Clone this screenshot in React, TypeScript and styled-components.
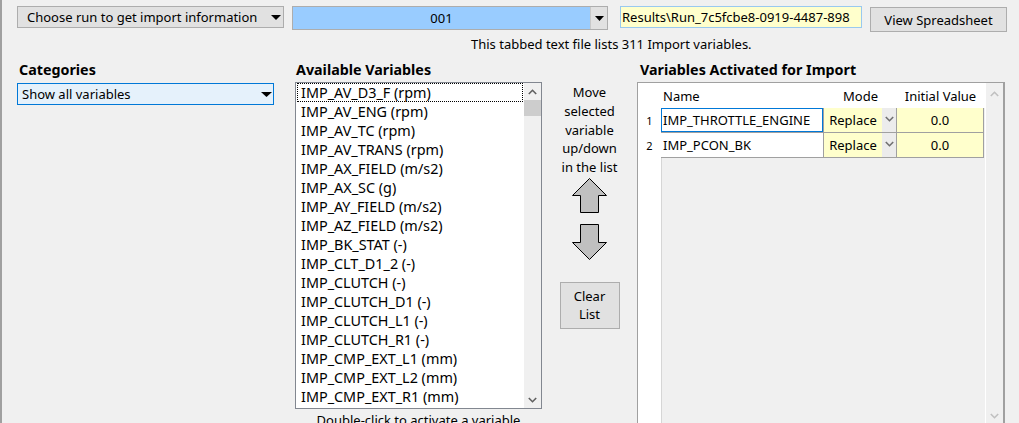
import * as React from 'react';
import styled, { createGlobalStyle } from 'styled-components';

const GlobalStyle = createGlobalStyle`
	html, body {
		margin: 0;
		padding: 0;
		background: #f0f0f0;
	}
	body {
		font-family: 'Noto Sans', 'Liberation Sans', sans-serif;
		font-size: 13px;
		color: #000;
	}
	* {
		box-sizing: border-box;
	}
`;

const Window = styled.div`
	width: 1019px;
	height: 423px;
	overflow: hidden;
	background: #f0f0f0;
	border-left: 2px solid #a0a0a0;
	padding-left: 15px;
`;

const TopBar = styled.div`
	display: flex;
	align-items: flex-start;
	padding-top: 6px;
	height: 32px;
`;

const DropButton = styled.div`
	width: 267px;
	height: 22px;
	background: #e1e1e1;
	border: 1px solid #adadad;
	display: flex;
	align-items: center;
	justify-content: space-between;
	padding: 0 2px 0 9px;
	white-space: nowrap;
`;

const RunCombo = styled.div`
	margin-left: 8px;
	width: 316px;
	height: 24px;
	border: 1px solid #adadad;
	display: flex;
`;

const RunValue = styled.div`
	flex: 1;
	background: #99ccff;
	text-align: center;
	line-height: 22px;
`;

const ComboArrow = styled.div`
	width: 17px;
	background: #e1e1e1;
	border-left: 1px solid #c8c8c8;
	display: flex;
	align-items: center;
	justify-content: center;
`;

const PathField = styled.div`
	margin-left: 12px;
	width: 242px;
	height: 22px;
	background: #ffffcc;
	border: 1px solid #99c9ef;
	padding-left: 1px;
	line-height: 20px;
	overflow: hidden;
	white-space: nowrap;
`;

const PushButton = styled.div<{ $w: number; $h: number }>`
	width: ${(p) => p.$w}px;
	height: ${(p) => p.$h}px;
	background: #e1e1e1;
	border: 1px solid #adadad;
	display: flex;
	align-items: center;
	justify-content: center;
	text-align: center;
	line-height: 18px;
`;

const ViewButton = styled(PushButton)`
	margin-left: 8px;
	margin-top: 1px;
`;

const Subtitle = styled.div`
	padding-left: 454px;
	margin-top: 3px;
	line-height: 19px;
	height: 19px;
	white-space: nowrap;
`;

const Main = styled.div`
	display: flex;
	margin-top: 6px;
`;

const Column = styled.div<{ $w: number; $gap?: number }>`
	width: ${(p) => p.$w}px;
	margin-left: ${(p) => p.$gap ?? 0}px;
	display: flex;
	flex-direction: column;
`;

const Label = styled.div<{ $indent: number }>`
	font-weight: 700;
	font-size: 14.3px;
	line-height: 20px;
	height: 20px;
	padding-left: ${(p) => p.$indent}px;
	white-space: nowrap;
`;

const CategorySelect = styled.div`
	margin-top: 3px;
	height: 22px;
	background: #e5f1fb;
	border: 1px solid #0078d7;
	display: flex;
	align-items: center;
	justify-content: space-between;
	padding: 0 1px 0 4px;
`;

const ListBox = styled.div`
	margin-top: 2px;
	height: 327px;
	background: #fff;
	border: 1px solid #828790;
	display: flex;
`;

const Items = styled.div`
	flex: 1;
	padding: 0 1px;
	overflow: hidden;
`;

const Item = styled.div<{ $focused?: boolean }>`
	height: 19px;
	line-height: 19px;
	font-size: 14.4px;
	padding-left: 4px;
	white-space: nowrap;
	outline: ${(p) => (p.$focused ? '1px dotted #000' : 'none')};
	outline-offset: -1px;
`;

const ScrollBar = styled.div`
	width: 17px;
	background: #f0f0f0;
	display: flex;
	flex-direction: column;
	align-items: center;
`;

const ScrollArrow = styled.div`
	height: 17px;
	width: 100%;
	display: flex;
	align-items: center;
	justify-content: center;
`;

const Thumb = styled.div`
	width: 100%;
	height: 16px;
	background: #cdcdcd;
`;

const ScrollSpacer = styled.div`
	flex: 1;
`;

const Caption = styled.div`
	margin-top: 2px;
	text-align: center;
	line-height: 19px;
	white-space: nowrap;
`;

const MoveColumn = styled.div`
	width: 95px;
	display: flex;
	flex-direction: column;
	align-items: center;
	padding-top: 23px;
`;

const MoveText = styled.div`
	text-align: center;
	line-height: 18.75px;
`;

const ArrowIcon = styled.svg<{ $top: number }>`
	display: block;
	margin-top: ${(p) => p.$top}px;
`;

const ClearButton = styled(PushButton)`
	margin-top: 22px;
`;

const Table = styled.div`
	margin-top: 2px;
	height: 345px;
	border: 1px solid #a0a0a0;
	border-right: 2px solid #a0a0a0;
	display: flex;
`;

const RowHeader = styled.div`
	width: 23px;
	background: #fff;
	display: flex;
	flex-direction: column;
	padding-top: 25px;
`;

const RowNumber = styled.div`
	height: 25px;
	line-height: 25px;
	font-size: 11px;
	text-align: center;
`;

const GridArea = styled.div`
	flex: 1;
	display: flex;
	flex-direction: column;
`;

const HeaderRow = styled.div`
	display: flex;
	height: 25px;
	background: #fff;
	padding-top: 2px;
	line-height: 23px;
`;

const HeaderCell = styled.div<{ $w: number; $align: string }>`
	width: ${(p) => p.$w}px;
	text-align: ${(p) => p.$align};
	padding-left: ${(p) => (p.$align === 'left' ? 2 : 0)}px;
	white-space: nowrap;
`;

const DataRow = styled.div`
	display: flex;
	height: 25px;
	line-height: 25px;
`;

const NameCell = styled.div<{ $focused?: boolean }>`
	width: 163px;
	background: #fff;
	border-right: 1px solid #a0a0a0;
	border-bottom: 1px solid #a0a0a0;
	padding-left: 2px;
	white-space: nowrap;
	overflow: hidden;
	box-shadow: ${(p) => (p.$focused ? 'inset 0 0 0 1px #0078d7' : 'none')};
`;

const ModeCell = styled.div`
	width: 73px;
	display: flex;
	border-right: 1px solid #a0a0a0;
	border-bottom: 1px solid #a0a0a0;
`;

const ModeValue = styled.div`
	flex: 1;
	background: #ffffcc;
	text-align: center;
`;

const ModeButton = styled.div`
	width: 14px;
	background: #ececec;
	display: flex;
	justify-content: center;
	padding-top: 8px;
`;

const ValueCell = styled.div`
	width: 87px;
	background: #ffffcc;
	text-align: center;
	border-right: 1px solid #a0a0a0;
	border-bottom: 1px solid #a0a0a0;
`;

const Filler = styled.div`
	flex: 1;
	background: #f0f0f0;
	border-left: 1px solid #d6d6d6;
`;

const TableScroll = styled.div`
	width: 18px;
	background: #f0f0f0;
	border-left: 1px solid #fff;
	display: flex;
	flex-direction: column;
	justify-content: space-between;
	padding: 2px 0;
`;

function Caret({ w = 10, h = 5 }: { w?: number; h?: number }) {
	return (
		<svg width={w} height={h} viewBox={`0 0 ${w} ${h}`}>
			<polygon points={`0,0 ${w},0 ${w / 2},${h}`} fill="#000" />
		</svg>
	);
}

function Chevron({ up, color }: { up?: boolean; color: string }) {
	return (
		<svg width="9" height="6" viewBox="0 0 9 6">
			<polyline
				points={up ? '0.8,5 4.5,1.3 8.2,5' : '0.8,1 4.5,4.7 8.2,1'}
				fill="none"
				stroke={color}
				strokeWidth="1.6"
			/>
		</svg>
	);
}

function MoveArrow({ down, top }: { down?: boolean; top: number }) {
	const pts = down
		? '8.5,0.5 26.5,0.5 26.5,18.5 34.5,18.5 17.5,35.5 0.5,18.5 8.5,18.5'
		: '17.5,0.5 34.5,17.5 26.5,17.5 26.5,34.5 8.5,34.5 8.5,17.5 0.5,17.5';
	return (
		<ArrowIcon $top={top} width="35" height="36" viewBox="0 0 35 36">
			<polygon points={pts} fill="#c0c0c0" stroke="#000" strokeWidth="1" />
		</ArrowIcon>
	);
}

const variables = [
	'IMP_AV_D3_F (rpm)',
	'IMP_AV_ENG (rpm)',
	'IMP_AV_TC (rpm)',
	'IMP_AV_TRANS (rpm)',
	'IMP_AX_FIELD (m/s2)',
	'IMP_AX_SC (g)',
	'IMP_AY_FIELD (m/s2)',
	'IMP_AZ_FIELD (m/s2)',
	'IMP_BK_STAT (-)',
	'IMP_CLT_D1_2 (-)',
	'IMP_CLUTCH (-)',
	'IMP_CLUTCH_D1 (-)',
	'IMP_CLUTCH_L1 (-)',
	'IMP_CLUTCH_R1 (-)',
	'IMP_CMP_EXT_L1 (mm)',
	'IMP_CMP_EXT_L2 (mm)',
	'IMP_CMP_EXT_R1 (mm)',
];

const activated = [
	{ name: 'IMP_THROTTLE_ENGINE', mode: 'Replace', value: '0.0' },
	{ name: 'IMP_PCON_BK', mode: 'Replace', value: '0.0' },
];

export default function App() {
	return (
		<Window>
			<GlobalStyle />
			<TopBar>
				<DropButton>
					<span>Choose run to get import information</span>
					<Caret />
				</DropButton>
				<RunCombo>
					<RunValue>001</RunValue>
					<ComboArrow>
						<Caret w={9} h={5} />
					</ComboArrow>
				</RunCombo>
				<PathField>Results\Run_7c5fcbe8-0919-4487-898</PathField>
				<ViewButton $w={137} $h={25}>
					View Spreadsheet
				</ViewButton>
			</TopBar>
			<Subtitle>This tabbed text file lists 311 Import variables.</Subtitle>
			<Main>
				<Column $w={257}>
					<Label $indent={2}>Categories</Label>
					<CategorySelect>
						<span>Show all variables</span>
						<Caret w={11} h={5} />
					</CategorySelect>
				</Column>
				<Column $w={247} $gap={21}>
					<Label $indent={1}>Available Variables</Label>
					<ListBox>
						<Items>
							{variables.map((v, i) => (
								<Item key={v} $focused={i === 0}>
									{v}
								</Item>
							))}
						</Items>
						<ScrollBar>
							<ScrollArrow>
								<Chevron up color="#606060" />
							</ScrollArrow>
							<Thumb />
							<ScrollSpacer />
							<ScrollArrow>
								<Chevron color="#606060" />
							</ScrollArrow>
						</ScrollBar>
					</ListBox>
					<Caption>Double-click to activate a variable</Caption>
				</Column>
				<MoveColumn>
					<MoveText>
						Move
						<br />
						selected
						<br />
						variable
						<br />
						up/down
						<br />
						in the list
					</MoveText>
					<MoveArrow top={1} />
					<MoveArrow down top={10} />
					<ClearButton $w={60} $h={47}>
						Clear
						<br />
						List
					</ClearButton>
				</MoveColumn>
				<Column $w={368}>
					<Label $indent={3}>Variables Activated for Import</Label>
					<Table>
						<RowHeader>
							{activated.map((r, i) => (
								<RowNumber key={r.name}>{i + 1}</RowNumber>
							))}
						</RowHeader>
						<GridArea>
							<HeaderRow>
								<HeaderCell $w={163} $align="left">
									Name
								</HeaderCell>
								<HeaderCell $w={73} $align="center">
									Mode
								</HeaderCell>
								<HeaderCell $w={87} $align="center">
									Initial Value
								</HeaderCell>
							</HeaderRow>
							{activated.map((r, i) => (
								<DataRow key={r.name}>
									<NameCell $focused={i === 0}>{r.name}</NameCell>
									<ModeCell>
										<ModeValue>{r.mode}</ModeValue>
										<ModeButton>
											<Chevron color="#707070" />
										</ModeButton>
									</ModeCell>
									<ValueCell>{r.value}</ValueCell>
								</DataRow>
							))}
							<Filler />
						</GridArea>
						<TableScroll>
							<ScrollArrow>
								<Chevron up color="#c0c0c0" />
							</ScrollArrow>
							<ScrollArrow>
								<Chevron color="#c0c0c0" />
							</ScrollArrow>
						</TableScroll>
					</Table>
				</Column>
			</Main>
		</Window>
	);
}
